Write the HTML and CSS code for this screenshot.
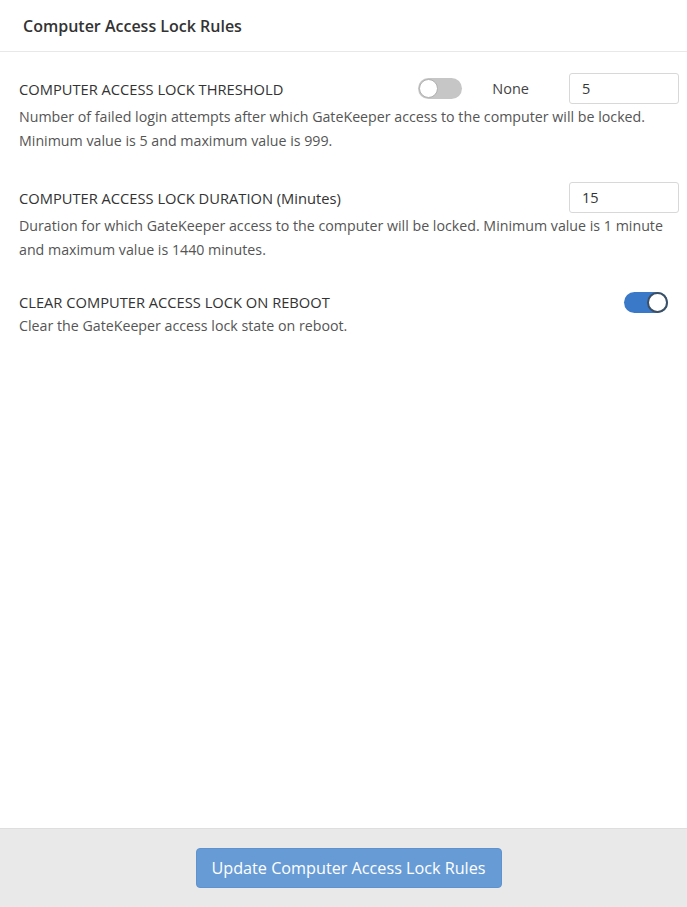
FILE: index.html
```html
<!DOCTYPE html>
<html>
<head>
<meta charset="utf-8">
<link rel="stylesheet" href="styles.css">
</head>
<body>
<div class="page">
  <header class="header">
    <h1 class="title">Computer Access Lock Rules</h1>
  </header>
  <main class="content">
    <section class="rule">
      <div class="rule-head">
        <div class="label">COMPUTER ACCESS LOCK THRESHOLD</div>
        <div class="controls">
          <span class="toggle off"><span class="knob"></span></span>
          <span class="none">None</span>
          <input class="field" type="text" value="5">
        </div>
      </div>
      <p class="desc">Number of failed login attempts after which GateKeeper access to the computer will be locked. Minimum value is 5 and maximum value is 999.</p>
    </section>
    <section class="rule">
      <div class="rule-head">
        <div class="label">COMPUTER ACCESS LOCK DURATION (Minutes)</div>
        <div class="controls">
          <input class="field" type="text" value="15">
        </div>
      </div>
      <p class="desc">Duration for which GateKeeper access to the computer will be locked. Minimum value is 1 minute and maximum value is 1440 minutes.</p>
    </section>
    <section class="rule">
      <div class="rule-head short">
        <div class="label">CLEAR COMPUTER ACCESS LOCK ON REBOOT</div>
        <div class="controls">
          <span class="toggle on"><span class="knob"></span></span>
        </div>
      </div>
      <p class="desc">Clear the GateKeeper access lock state on reboot.</p>
    </section>
  </main>
  <footer class="footer">
    <button class="btn">Update Computer Access Lock Rules</button>
  </footer>
</div>
</body>
</html>
```
FILE: styles.css
```css
* { box-sizing: border-box; }
html, body { margin: 0; padding: 0; }
body {
  font-family: "Open Sans", "Noto Sans", sans-serif;
  color: #333;
  background: #fff;
}
.page {
  width: 687px;
  height: 907px;
  display: flex;
  flex-direction: column;
}
.header {
  height: 52px;
  border-bottom: 1px solid #e8e8e8;
  padding: 0 23px;
  display: flex;
  align-items: center;
}
.title {
  margin: 0;
  font-size: 16px;
  font-weight: 600;
  color: #333;
}
.content {
  flex: 1;
  padding: 21px 8px 0 19px;
}
.rule { margin-bottom: 29px; }
.rule-head {
  display: flex;
  align-items: center;
  justify-content: space-between;
  height: 31px;
}
.rule-head.short { height: 22px; }
.label {
  font-size: 14.7px;
  color: #333;
}
.controls {
  display: flex;
  align-items: center;
}
.toggle {
  position: relative;
  width: 44px;
  height: 21px;
  border-radius: 11px;
  display: inline-block;
}
.toggle .knob {
  position: absolute;
  top: 1px;
  width: 19px;
  height: 19px;
  border-radius: 50%;
  background: #fff;
}
.toggle.off { background: #c6c6c6; }
.toggle.off .knob { left: 1px; border: 1px solid #b0b0b0; }
.toggle.on { background: #3a78c8; margin-right: 11px; }
.toggle.on .knob { border: 2px solid #3d4f63; top: 0; width: 21px; height: 21px; right: 0; }
.none {
  font-size: 14.5px;
  color: #444;
  margin: 0 40px 0 30px;
}
.field {
  width: 110px;
  height: 31px;
  border: 1px solid #d8d8d8;
  border-radius: 3px;
  padding: 0 12px;
  font-family: inherit;
  font-size: 14.5px;
  color: #333;
  outline: none;
}
.desc {
  margin: 1px 0 0;
  font-size: 14.23px;
  line-height: 24px;
  color: #555;
}
.footer {
  height: 79px;
  background: #e9e9e9;
  border-top: 1px solid #dedede;
  padding-left: 10px;
  display: flex;
  align-items: center;
  justify-content: center;
}
.btn {
  width: 306px;
  height: 40px;
  background: #679bd6;
  color: #fff;
  border: 1px solid #5f93cf;
  border-radius: 4px;
  font-family: inherit;
  font-size: 16.2px;
}
```
